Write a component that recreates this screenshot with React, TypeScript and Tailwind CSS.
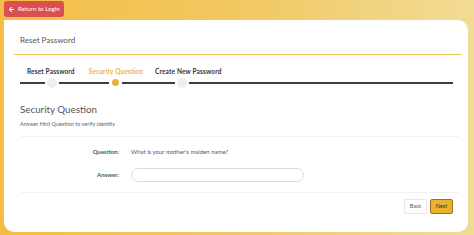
import React from 'react';
import { ArrowLeft } from 'lucide-react';

function Stepper() {
  return (
    <div className="mt-[14px] pl-[16px] pr-[15px]">
      <div className="flex text-[6.5px] font-bold leading-none tracking-[0.15px] text-[#333]">
        <span className="ml-[7px]">Reset Password</span>
        <span className="ml-[14px] text-[#e9b440]">Security Question</span>
        <span className="ml-[12px]">Create New Password</span>
      </div>
      <div className="mt-[2px] flex items-center">
        <div className="h-[2px] w-[25px] bg-[#3d3d3d]" />
        <div className="mx-[2px] h-[10px] w-[10px] rounded-full bg-[#eeeeee]" />
        <div className="h-[2px] w-[50px] bg-[#3d3d3d]" />
        <div className="mx-[3px] h-[7px] w-[7px] rounded-full bg-[#e9b03a]" />
        <div className="h-[2px] w-[53px] bg-[#3d3d3d]" />
        <div className="mx-[2px] h-[10px] w-[10px] rounded-full bg-[#eeeeee]" />
        <div className="h-[2px] flex-1 bg-[#3d3d3d]" />
      </div>
    </div>
  );
}

export default function App() {
  return (
    <div
      className="h-[235px] w-[474px] overflow-hidden bg-gradient-to-r from-[#f4bd45] via-[#f1c860] to-[#f2db95] pt-[1px]"
      style={{ fontFamily: 'Lato, "Open Sans", sans-serif' }}
    >
      <button className="ml-[4px] flex h-[16px] items-center gap-[3px] rounded-[3px] bg-[#dc4f4f] px-[4px] text-[6.2px] text-white">
        <ArrowLeft className="h-[7px] w-[7px]" strokeWidth={3.5} />
        Return to Login
      </button>
      <div className="ml-[4px] mt-[3px] flex h-[212px] w-[464px] flex-col rounded-b-[10px] rounded-tr-[10px] bg-white">
        <div className="pl-[16px] pt-[16px] text-[8px] leading-none text-[#555]">Reset Password</div>
        <div className="ml-[10px] mr-[6px] mt-[10px] h-[1px] bg-[#f0c455]" />
        <Stepper />
        <div className="mt-[17px] pl-[16px] text-[9.8px] leading-none text-[#555]">Security Question</div>
        <div className="mt-[8px] pl-[16px] text-[5.5px] leading-none text-[#666]">
          Answer Hint Question to verify identity
        </div>
        <div className="ml-[16px] mr-[8px] mt-[8px] h-[1px] bg-[#f3f3f3]" />
        <div className="mt-[10px] flex items-center text-[6px] text-[#555]">
          <div className="w-[115px] text-right font-bold">Question:</div>
          <div className="ml-[12px]">What is your mother's maiden name?</div>
        </div>
        <div className="mt-[12px] flex items-center text-[6px] text-[#555]">
          <div className="w-[115px] text-right font-bold">Answer:</div>
          <input className="ml-[12px] h-[14px] w-[173px] rounded-full border border-[#dcdcdc] outline-none" />
        </div>
        <div className="ml-[16px] mr-[8px] mt-[10px] h-[1px] bg-[#f3f3f3]" />
        <div className="mr-[15px] mt-[6px] flex justify-end gap-[3px]">
          <button className="h-[15px] w-[23px] rounded-[2px] border border-[#e5e5e5] bg-white text-[5.5px] text-[#555]">
            Back
          </button>
          <button className="h-[15px] w-[23px] rounded-[2px] border border-[#9a7418] bg-[#ebb02d] text-[5.5px] text-[#333]">
            Next
          </button>
        </div>
      </div>
    </div>
  );
}
